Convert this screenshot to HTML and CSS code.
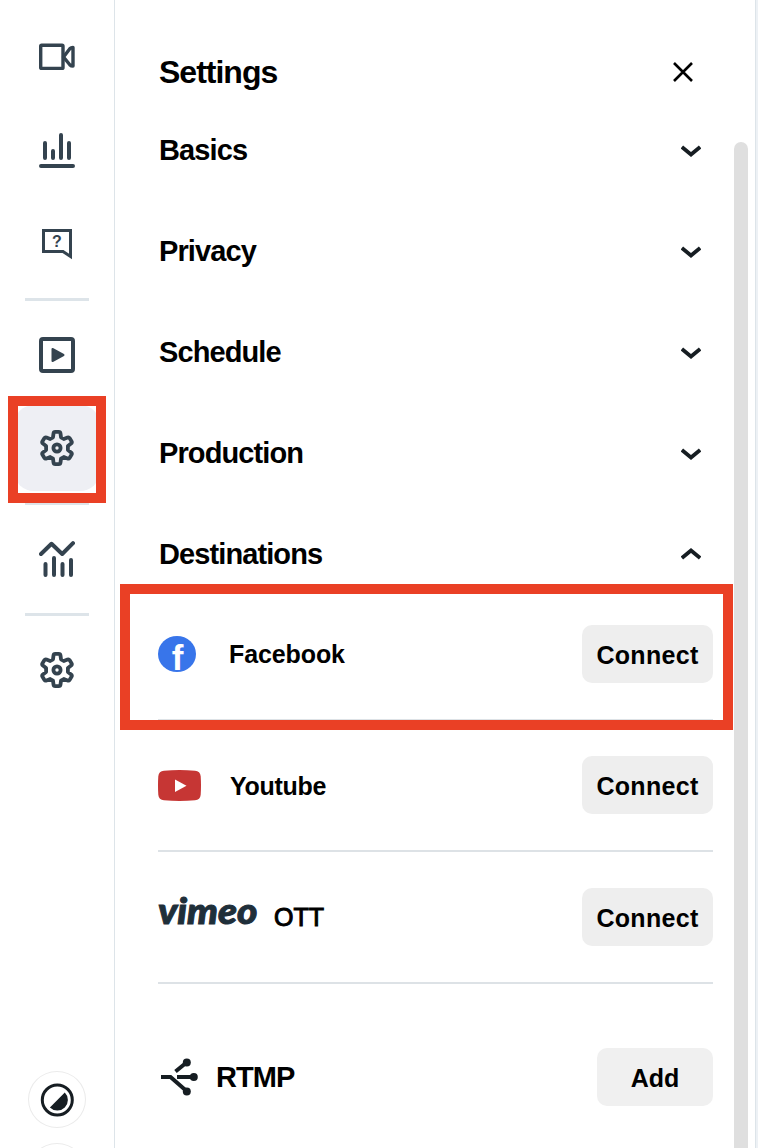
FILE: index.html
```html
<!DOCTYPE html>
<html lang="en">
<head>
    <meta charset="utf-8">
    <title>Settings</title>
    <link rel="stylesheet" href="styles.css">
</head>
<body>
    <svg class="sprite">
        <symbol id="gear" viewBox="0 0 36 36">
            <path d="M14.500 3.500q.2-1.600 1.800-1.600h3.400q1.600 0 1.800 1.600l.5 3.800 2.800 1.700 3.700-1.500q1.400-.5 2.200.8l1.800 2.900q.8 1.400-.4 2.400l-3.200 2.400v4l3.200 2.400q1.200 1 .4 2.400l-1.800 2.900q-.8 1.300-2.200.8l-3.700-1.500-2.800 1.700-.5 3.800q-.2 1.600-1.800 1.600h-3.400q-1.600 0-1.800-1.600l-.5-3.800-2.800-1.700-3.700 1.500q-1.400.5-2.200-.8l-1.800-2.900q-.8-1.400.4-2.400l3.200-2.400v-4l-3.200-2.400q-1.200-1-.4-2.400l1.800-2.900q.8-1.300 2.200-.8l3.700 1.500 2.800-1.700z"/>
            <circle cx="18" cy="18" r="3.600"/>
        </symbol>
        <symbol id="chevron" viewBox="0 0 20 12">
            <path d="M.9 2L10 9.500 19.100 2"/>
        </symbol>
    </svg>
    <div class="app">
        <nav class="sidebar">
            <a class="nav-item">
                <svg class="icon camera" viewBox="0 0 36 36"><rect x="1.700" y="6.200" width="22.300" height="23.200" rx="1"/><path d="M24.500 18l6.500-8.500q1-1 3-1v18.500q-2 0-3-1z"/></svg>
            </a>
            <a class="nav-item">
                <svg class="icon bars" viewBox="0 0 36 36"><path d="M6 11v15M14 19v7M22 3v23M30 11v15M2 34h32"/></svg>
            </a>
            <a class="nav-item">
                <svg class="icon" viewBox="0 0 36 36"><path class="bubble" d="M4.500 5.500h27v26l-7.500-5H4.500z"/><text x="18" y="22.300">?</text></svg>
            </a>
            <div class="nav-divider first"></div>
            <a class="nav-item">
                <svg class="icon player" viewBox="0 0 36 36"><rect x="2" y="2" width="32" height="32" rx="2"/><path d="M13.500 12v12l11-6z"/></svg>
            </a>
            <a class="nav-item active">
                <svg class="icon gear"><use href="#gear"/></svg>
                <span class="highlight"></span>
            </a>
            <div class="nav-divider"></div>
            <a class="nav-item">
                <svg class="icon bars" viewBox="0 0 36 36"><path d="M2 13L12.500 2.800 23.200 13 34 2.200M6.500 23v11M15 17v17M23.500 23v11M32 19v15"/></svg>
            </a>
            <div class="nav-divider"></div>
            <a class="nav-item">
                <svg class="icon gear"><use href="#gear"/></svg>
            </a>
            <div class="round-buttons">
                <button class="round">
                    <svg viewBox="0 0 34 34"><circle cx="17.300" cy="17" r="15"/><path d="M24.800 9.600A10.500 10.500 0 0 1 9.900 24.500z"/></svg>
                </button>
                <button class="round"></button>
            </div>
        </nav>

        <main class="panel">
            <header class="panel-header">
                <h1>Settings</h1>
                <svg class="close" viewBox="0 0 20 20"><path d="M1 1l18 18M19 1L1 19"/></svg>
            </header>
            <section class="row"><h2>Basics</h2><svg class="chevron"><use href="#chevron"/></svg></section>
            <section class="row"><h2>Privacy</h2><svg class="chevron"><use href="#chevron"/></svg></section>
            <section class="row"><h2>Schedule</h2><svg class="chevron"><use href="#chevron"/></svg></section>
            <section class="row"><h2>Production</h2><svg class="chevron"><use href="#chevron"/></svg></section>
            <section class="row open"><h2>Destinations</h2><svg class="chevron up"><use href="#chevron"/></svg></section>

            <div class="destination">
                <span class="facebook-logo">f</span>
                <span class="name facebook">Facebook</span>
                <button>Connect</button>
                <span class="highlight"></span>
            </div>
            <div class="destination">
                <svg class="youtube-logo" viewBox="0 0 43 31"><path class="screen" d="M6 .7q15.500-1.400 31 0 5.200.4 5.700 5.600.6 9.200 0 18.400-.5 5.200-5.700 5.600-15.500 1.400-31 0Q.8 29.900.3 24.700q-.6-9.200 0-18.400Q.8 1.100 6 .7z"/><path class="play" d="M17 9.500v12.500l11.500-6.200z"/></svg>
                <span class="name youtube">Youtube</span>
                <button>Connect</button>
            </div>
            <div class="destination">
                <span class="vimeo-logo">vimeo</span>
                <span class="name ott">OTT</span>
                <button>Connect</button>
            </div>
            <div class="destination rtmp-row">
                <svg class="rtmp-logo" viewBox="0 0 37 38"><path d="M0 19h9.500l16 14M14.500 13.500l11-9M16 19h16"/><circle cx="25.800" cy="4.500" r="4"/><circle cx="32.800" cy="19" r="4"/><circle cx="25.800" cy="33.500" r="4"/></svg>
                <h2>RTMP</h2>
                <button class="add">Add</button>
            </div>
        </main>
        <div class="scrollbar"></div>
        <div class="edge"></div>
    </div>
</body>
</html>
```
FILE: styles.css
```css
* {
    box-sizing: border-box;
}

body {
    margin: 0;
    font-family: "Liberation Sans", Arial, sans-serif;
    color: #000;
    background: #fff;
}

.sprite {
    position: absolute;
    width: 0;
    height: 0;
}

.app {
    display: flex;
    height: 1148px;
    overflow: hidden;
}

/* sidebar */
.sidebar {
    width: 115px;
    flex: none;
    display: flex;
    flex-direction: column;
    align-items: center;
    padding-top: 14px;
    border-right: 1px solid #dde4e9;
}

.nav-item {
    position: relative;
    display: flex;
    align-items: center;
    justify-content: center;
    width: 86px;
    height: 86px;
    flex: none;
    border-radius: 20px;
}

.nav-item + .nav-item {
    margin-top: 7px;
}

.nav-item.active {
    background: #eeeff4;
}

.nav-divider {
    width: 64px;
    height: 3px;
    flex: none;
    margin: 11px 0;
    background: #dde4e9;
}

.nav-divider.first {
    margin-top: 12px;
}

.icon {
    width: 36px;
    height: 36px;
    fill: none;
    stroke: #34434f;
    stroke-width: 3.2;
    stroke-linejoin: round;
    stroke-linecap: round;
}

.icon.camera {
    stroke-width: 3.4;
}

.icon.gear {
    stroke-width: 3.8;
}

.icon.bars,
.icon.player {
    stroke-width: 4;
}

.icon.player path {
    fill: #34434f;
    stroke-width: 2;
}

.icon .bubble {
    stroke-width: 3;
    stroke-linejoin: miter;
}

.icon text {
    font-size: 16px;
    font-weight: bold;
    text-anchor: middle;
    fill: #34434f;
    stroke: none;
}

.highlight {
    position: absolute;
    border: 10px solid #ea4025;
    z-index: 2;
}

.nav-item .highlight {
    top: -9px;
    left: -6px;
    width: 98px;
    height: 107px;
}

.round-buttons {
    margin-top: auto;
    height: 77px;
    display: flex;
    flex-direction: column;
    gap: 15px;
}

.round {
    width: 58px;
    height: 57px;
    flex: none;
    display: flex;
    align-items: center;
    justify-content: center;
    padding: 0;
    border: 1px solid #ebebeb;
    border-radius: 50%;
    background: #fff;
}

.round svg {
    width: 34px;
    height: 34px;
    fill: #161d22;
}

.round circle {
    fill: none;
    stroke: #161d22;
    stroke-width: 3;
}

/* settings panel */
.panel {
    width: 618px;
    flex: none;
    padding: 44px 20px 0 43px;
}

.panel-header {
    display: flex;
    align-items: center;
    justify-content: space-between;
    height: 56px;
    padding: 0 20px 0 1px;
}

h1 {
    margin: 0;
    font-size: 32px;
    letter-spacing: -1px;
}

h2 {
    margin: 0;
    font-size: 29px;
    letter-spacing: -0.9px;
}

.close {
    width: 20px;
    height: 20px;
    stroke: #000;
    stroke-width: 2.6;
}

.row {
    display: flex;
    align-items: center;
    justify-content: space-between;
    height: 101px;
    padding: 0 12px 0 1px;
}

.row.open {
    height: 85px;
    padding-top: 15px;
}

.chevron {
    width: 20px;
    height: 12px;
    margin-top: 1px;
    fill: none;
    stroke: #161d22;
    stroke-width: 3.8;
}

.up {
    margin-top: -1px;
    transform: rotate(180deg);
}

.destination {
    position: relative;
    display: flex;
    align-items: center;
    height: 131.5px;
    border-bottom: 2px solid #dde2e6;
}

.destination .highlight {
    left: -38px;
    top: -5px;
    width: 613px;
    height: 146px;
}

.name {
    padding-top: 2px;
    font-size: 25px;
    font-weight: bold;
}

.destination button {
    width: 131px;
    height: 58px;
    margin-left: auto;
    padding: 3px 0 0;
    border: none;
    border-radius: 10px;
    background: #eee;
    color: #000;
    font: bold 25px "Liberation Sans", Arial, sans-serif;
    letter-spacing: 0.3px;
}

.destination .add {
    width: 116px;
    background: #f0f0f0;
    letter-spacing: 0;
}

.facebook-logo {
    width: 38px;
    height: 36px;
    margin-right: 33px;
    padding-left: 1px;
    border-radius: 50%;
    background: #3875ea;
    color: #fff;
    font-size: 35px;
    font-weight: bold;
    line-height: 43px;
    text-align: center;
}

.youtube-logo {
    width: 43px;
    height: 31px;
    margin-right: 29px;
}

.youtube-logo .screen {
    fill: #c63634;
}

.youtube-logo .play {
    fill: #fff;
}

.facebook {
    letter-spacing: -0.1px;
}

.youtube {
    letter-spacing: -0.3px;
}

.vimeo-logo {
    width: 102px;
    margin: -13px 14px 0 0;
    color: #1f2f3a;
    font-family: Lato, sans-serif;
    font-size: 36px;
    font-weight: 900;
    font-style: italic;
    transform: scaleX(1.08);
    transform-origin: left;
    -webkit-text-stroke: 1px #1f2f3a;
}

.ott {
    font-weight: normal;
    -webkit-text-stroke: 1px #000;
}

.rtmp-row {
    height: 187px;
    border: none;
}

.rtmp-logo {
    width: 37px;
    height: 38px;
    margin: 0 18px 0 3px;
    fill: #161d22;
}

.rtmp-logo path {
    fill: none;
    stroke: #161d22;
    stroke-width: 4;
}

.scrollbar {
    width: 14px;
    flex: none;
    margin: 142px 0 0 1px;
    border-radius: 7px 7px 0 0;
    background: #dfdfdf;
}

.edge {
    width: 3px;
    margin-left: 7px;
    flex: none;
    border-left: 1px solid #dde4e9;
    background: #edf1f5;
}
```
